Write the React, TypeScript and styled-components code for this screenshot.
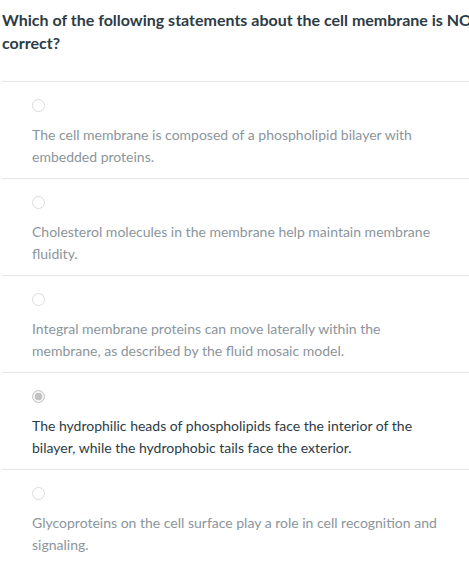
import React from "react";
import styled, { createGlobalStyle } from "styled-components";

const GlobalStyle = createGlobalStyle`
  html, body {
    margin: 0;
    padding: 0;
    background: #ffffff;
    overflow: hidden;
  }
  body {
    font-family: Lato, "Noto Sans", sans-serif;
  }
`;

const options = [
  "The cell membrane is composed of a phospholipid bilayer with embedded proteins.",
  "Cholesterol molecules in the membrane help maintain membrane fluidity.",
  "Integral membrane proteins can move laterally within the membrane, as described by the fluid mosaic model.",
  "The hydrophilic heads of phospholipids face the interior of the bilayer, while the hydrophobic tails face the exterior.",
  "Glycoproteins on the cell surface play a role in cell recognition and signaling.",
];

const SELECTED = 3;

export default function App() {
  return (
    <>
      <GlobalStyle />
      <Question>
        <Prompt>
          Which of the following statements about the cell membrane is NOT
          correct?
        </Prompt>
        <Answers>
          {options.map((text, i) => (
            <Answer key={i}>
              <Radio selected={i === SELECTED} />
              <AnswerText selected={i === SELECTED}>{text}</AnswerText>
            </Answer>
          ))}
        </Answers>
      </Question>
    </>
  );
}

const Question = styled.div`
  width: 540px;
  padding: 8px 0 0 2px;
`;

const Prompt = styled.h2`
  margin: 0 0 27px 0;
  width: 520px;
  font-size: 16px;
  font-weight: 700;
  line-height: 23px;
  color: #2d3b45;
`;

const Answers = styled.div`
  display: flex;
  flex-direction: column;
`;

const Answer = styled.div`
  display: flex;
  flex-direction: column;
  align-items: flex-start;
  gap: 12px;
  border-top: 1px solid #e6e6e6;
  padding: 17px 0 10px 30px;
`;

const Radio = styled.span<{ selected: boolean }>`
  box-sizing: border-box;
  width: 13px;
  height: 13px;
  border-radius: 50%;
  border: 1px solid ${(p) => (p.selected ? "#c4c4c4" : "#dcdcdc")};
  background: ${(p) =>
    p.selected
      ? "radial-gradient(circle, #c2c2c2 0 3.5px, #f2f2f2 4px)"
      : "#ffffff"};
`;

const AnswerText = styled.div<{ selected: boolean }>`
  width: 414px;
  font-size: 14px;
  line-height: 22px;
  color: ${(p) => (p.selected ? "#2d3b45" : "#8b959c")};
`;
